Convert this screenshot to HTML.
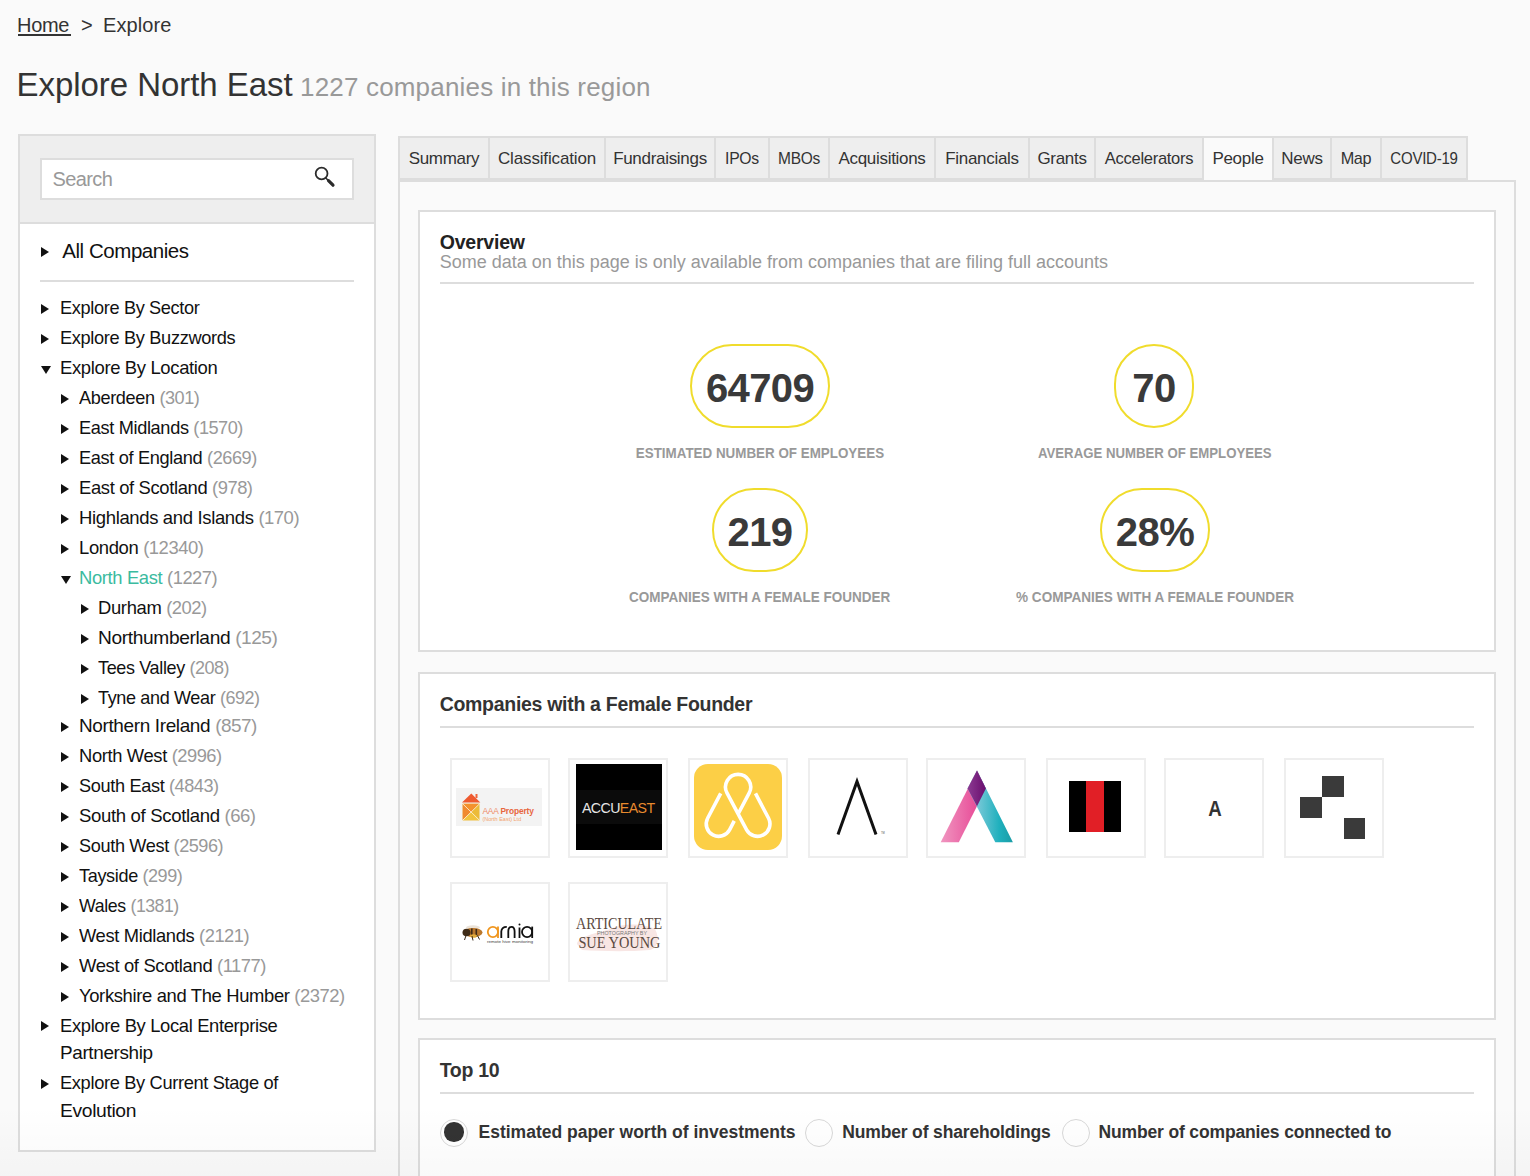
<!DOCTYPE html>
<html><head><meta charset="utf-8"><title>Explore North East</title>
<style>
html,body{margin:0;padding:0}
body{width:1530px;height:1176px;overflow:hidden;position:relative;background:#fafafa;font-family:"Liberation Sans",sans-serif}
.t{position:absolute;white-space:nowrap;line-height:1}
.r{position:absolute}
</style></head><body>
<div class="t" style="left:17px;top:15px;font-size:20px;color:#333;letter-spacing:-0.3px;">Home</div>
<div class="r" style="left:18px;top:34px;width:53px;height:2px;background:#333"></div>
<div class="t" style="left:81px;top:15px;font-size:20px;color:#333;">&gt;</div>
<div class="t" style="left:103px;top:15px;font-size:20px;color:#333;letter-spacing:0.1px;">Explore</div>
<div class="t" style="left:16.5px;top:68px;font-size:33px;color:#333;letter-spacing:-0.05px;">Explore North East</div>
<div class="t" style="left:300px;top:74px;font-size:26px;color:#999;letter-spacing:0.18px;">1227 companies in this region</div>
<div class="r" style="left:18px;top:134px;width:358px;height:1018px;border:2px solid #ddd;box-sizing:border-box;background:#fff"></div>
<div class="r" style="left:20px;top:136px;width:354px;height:86px;background:#eee"></div>
<div class="r" style="left:20px;top:222px;width:354px;height:2px;background:#ddd"></div>
<div class="r" style="left:40px;top:158px;width:314px;height:42px;border:2px solid #ddd;box-sizing:border-box;background:#fff"></div>
<div class="t" style="left:52.5px;top:169px;font-size:20px;color:#999;letter-spacing:-0.6px;">Search</div>
<svg class="r" style="left:312px;top:164px" width="26" height="26" viewBox="0 0 26 26"><circle cx="9.6" cy="9.5" r="5.9" fill="none" stroke="#2b2b2b" stroke-width="1.8"/><line x1="13.6" y1="13.8" x2="21" y2="21.2" stroke="#2b2b2b" stroke-width="1.6"/><line x1="16.5" y1="16.7" x2="21" y2="21.2" stroke="#2b2b2b" stroke-width="3.2" stroke-linecap="round"/></svg>
<div class="r" style="left:41px;top:246.5px;width:0;height:0;border-top:5px solid transparent;border-bottom:5px solid transparent;border-left:8px solid #111"></div>
<div class="t" style="left:62.3px;top:241px;font-size:20.5px;color:#111;letter-spacing:-0.45px;">All Companies</div>
<div class="r" style="left:40px;top:280px;width:314px;height:2px;background:#ddd"></div>
<div class="r" style="left:41px;top:303.5px;width:0;height:0;border-top:5px solid transparent;border-bottom:5px solid transparent;border-left:8px solid #111"></div>
<div class="t" style="left:60.3px;top:299px;font-size:18.5px;color:#111;letter-spacing:-0.35px;transform-origin:0 0;transform:scaleX(0.9817);">Explore By Sector</div>
<div class="r" style="left:41px;top:333.5px;width:0;height:0;border-top:5px solid transparent;border-bottom:5px solid transparent;border-left:8px solid #111"></div>
<div class="t" style="left:60.3px;top:329px;font-size:18.5px;color:#111;letter-spacing:-0.35px;transform-origin:0 0;transform:scaleX(0.9842);">Explore By Buzzwords</div>
<div class="r" style="left:41px;top:365.5px;width:0;height:0;border-left:5px solid transparent;border-right:5px solid transparent;border-top:8px solid #111"></div>
<div class="t" style="left:60.3px;top:359px;font-size:18.5px;color:#111;letter-spacing:-0.35px;transform-origin:0 0;transform:scaleX(0.9968);">Explore By Location</div>
<div class="r" style="left:61px;top:393.5px;width:0;height:0;border-top:5px solid transparent;border-bottom:5px solid transparent;border-left:8px solid #111"></div>
<div class="t" style="left:79.3px;top:389px;font-size:18.5px;color:#111;letter-spacing:-0.35px;transform-origin:0 0;transform:scaleX(0.9786);">Aberdeen <span style="color:#999;letter-spacing:-0.5px">(301)</span></div>
<div class="r" style="left:61px;top:423.5px;width:0;height:0;border-top:5px solid transparent;border-bottom:5px solid transparent;border-left:8px solid #111"></div>
<div class="t" style="left:79.3px;top:419px;font-size:18.5px;color:#111;letter-spacing:-0.35px;transform-origin:0 0;transform:scaleX(0.9819);">East Midlands <span style="color:#999;letter-spacing:-0.5px">(1570)</span></div>
<div class="r" style="left:61px;top:453.5px;width:0;height:0;border-top:5px solid transparent;border-bottom:5px solid transparent;border-left:8px solid #111"></div>
<div class="t" style="left:79.3px;top:449px;font-size:18.5px;color:#111;letter-spacing:-0.35px;transform-origin:0 0;transform:scaleX(0.9838);">East of England <span style="color:#999;letter-spacing:-0.5px">(2669)</span></div>
<div class="r" style="left:61px;top:483.5px;width:0;height:0;border-top:5px solid transparent;border-bottom:5px solid transparent;border-left:8px solid #111"></div>
<div class="t" style="left:79.3px;top:479px;font-size:18.5px;color:#111;letter-spacing:-0.35px;transform-origin:0 0;transform:scaleX(0.9936);">East of Scotland <span style="color:#999;letter-spacing:-0.5px">(978)</span></div>
<div class="r" style="left:61px;top:513.5px;width:0;height:0;border-top:5px solid transparent;border-bottom:5px solid transparent;border-left:8px solid #111"></div>
<div class="t" style="left:79.3px;top:509px;font-size:18.5px;color:#111;letter-spacing:-0.35px;transform-origin:0 0;transform:scaleX(0.9995);">Highlands and Islands <span style="color:#999;letter-spacing:-0.5px">(170)</span></div>
<div class="r" style="left:61px;top:543.5px;width:0;height:0;border-top:5px solid transparent;border-bottom:5px solid transparent;border-left:8px solid #111"></div>
<div class="t" style="left:79.3px;top:539px;font-size:18.5px;color:#111;letter-spacing:-0.35px;transform-origin:0 0;transform:scaleX(0.9967);">London <span style="color:#999;letter-spacing:-0.5px">(12340)</span></div>
<div class="r" style="left:61px;top:575.5px;width:0;height:0;border-left:5px solid transparent;border-right:5px solid transparent;border-top:8px solid #111"></div>
<div class="t" style="left:79.3px;top:569px;font-size:18.5px;color:#3bbba0;letter-spacing:-0.35px;transform-origin:0 0;transform:scaleX(0.9927);">North East <span style="color:#999;letter-spacing:-0.5px">(1227)</span></div>
<div class="r" style="left:81px;top:603.5px;width:0;height:0;border-top:5px solid transparent;border-bottom:5px solid transparent;border-left:8px solid #111"></div>
<div class="t" style="left:98.3px;top:599px;font-size:18.5px;color:#111;letter-spacing:-0.35px;transform-origin:0 0;transform:scaleX(0.9954);">Durham <span style="color:#999;letter-spacing:-0.5px">(202)</span></div>
<div class="r" style="left:81px;top:633.5px;width:0;height:0;border-top:5px solid transparent;border-bottom:5px solid transparent;border-left:8px solid #111"></div>
<div class="t" style="left:98.3px;top:629px;font-size:18.5px;color:#111;letter-spacing:-0.35px;transform-origin:0 0;transform:scaleX(1.0349);">Northumberland <span style="color:#999;letter-spacing:-0.5px">(125)</span></div>
<div class="r" style="left:81px;top:663.5px;width:0;height:0;border-top:5px solid transparent;border-bottom:5px solid transparent;border-left:8px solid #111"></div>
<div class="t" style="left:98.3px;top:659px;font-size:18.5px;color:#111;letter-spacing:-0.35px;transform-origin:0 0;transform:scaleX(0.9723);">Tees Valley <span style="color:#999;letter-spacing:-0.5px">(208)</span></div>
<div class="r" style="left:81px;top:693.5px;width:0;height:0;border-top:5px solid transparent;border-bottom:5px solid transparent;border-left:8px solid #111"></div>
<div class="t" style="left:98.3px;top:689px;font-size:18.5px;color:#111;letter-spacing:-0.35px;transform-origin:0 0;transform:scaleX(0.9733);">Tyne and Wear <span style="color:#999;letter-spacing:-0.5px">(692)</span></div>
<div class="r" style="left:61px;top:721.5px;width:0;height:0;border-top:5px solid transparent;border-bottom:5px solid transparent;border-left:8px solid #111"></div>
<div class="t" style="left:79.3px;top:717px;font-size:18.5px;color:#111;letter-spacing:-0.35px;transform-origin:0 0;transform:scaleX(1.0245);">Northern Ireland <span style="color:#999;letter-spacing:-0.5px">(857)</span></div>
<div class="r" style="left:61px;top:751.5px;width:0;height:0;border-top:5px solid transparent;border-bottom:5px solid transparent;border-left:8px solid #111"></div>
<div class="t" style="left:79.3px;top:747px;font-size:18.5px;color:#111;letter-spacing:-0.35px;transform-origin:0 0;transform:scaleX(0.9909);">North West <span style="color:#999;letter-spacing:-0.5px">(2996)</span></div>
<div class="r" style="left:61px;top:781.5px;width:0;height:0;border-top:5px solid transparent;border-bottom:5px solid transparent;border-left:8px solid #111"></div>
<div class="t" style="left:79.3px;top:777px;font-size:18.5px;color:#111;letter-spacing:-0.35px;transform-origin:0 0;transform:scaleX(0.9808);">South East <span style="color:#999;letter-spacing:-0.5px">(4843)</span></div>
<div class="r" style="left:61px;top:811.5px;width:0;height:0;border-top:5px solid transparent;border-bottom:5px solid transparent;border-left:8px solid #111"></div>
<div class="t" style="left:79.3px;top:807px;font-size:18.5px;color:#111;letter-spacing:-0.35px;transform-origin:0 0;transform:scaleX(1.004);">South of Scotland <span style="color:#999;letter-spacing:-0.5px">(66)</span></div>
<div class="r" style="left:61px;top:841.5px;width:0;height:0;border-top:5px solid transparent;border-bottom:5px solid transparent;border-left:8px solid #111"></div>
<div class="t" style="left:79.3px;top:837px;font-size:18.5px;color:#111;letter-spacing:-0.35px;transform-origin:0 0;transform:scaleX(0.9794);">South West <span style="color:#999;letter-spacing:-0.5px">(2596)</span></div>
<div class="r" style="left:61px;top:871.5px;width:0;height:0;border-top:5px solid transparent;border-bottom:5px solid transparent;border-left:8px solid #111"></div>
<div class="t" style="left:79.3px;top:867px;font-size:18.5px;color:#111;letter-spacing:-0.35px;transform-origin:0 0;transform:scaleX(0.9761);">Tayside <span style="color:#999;letter-spacing:-0.5px">(299)</span></div>
<div class="r" style="left:61px;top:901.5px;width:0;height:0;border-top:5px solid transparent;border-bottom:5px solid transparent;border-left:8px solid #111"></div>
<div class="t" style="left:79.3px;top:897px;font-size:18.5px;color:#111;letter-spacing:-0.35px;transform-origin:0 0;transform:scaleX(0.9572);">Wales <span style="color:#999;letter-spacing:-0.5px">(1381)</span></div>
<div class="r" style="left:61px;top:931.5px;width:0;height:0;border-top:5px solid transparent;border-bottom:5px solid transparent;border-left:8px solid #111"></div>
<div class="t" style="left:79.3px;top:927px;font-size:18.5px;color:#111;letter-spacing:-0.35px;transform-origin:0 0;transform:scaleX(0.9906);">West Midlands <span style="color:#999;letter-spacing:-0.5px">(2121)</span></div>
<div class="r" style="left:61px;top:961.5px;width:0;height:0;border-top:5px solid transparent;border-bottom:5px solid transparent;border-left:8px solid #111"></div>
<div class="t" style="left:79.3px;top:957px;font-size:18.5px;color:#111;letter-spacing:-0.35px;transform-origin:0 0;transform:scaleX(0.9952);">West of Scotland <span style="color:#999;letter-spacing:-0.5px">(1177)</span></div>
<div class="r" style="left:61px;top:991.5px;width:0;height:0;border-top:5px solid transparent;border-bottom:5px solid transparent;border-left:8px solid #111"></div>
<div class="t" style="left:79.3px;top:987px;font-size:18.5px;color:#111;letter-spacing:-0.35px;transform-origin:0 0;transform:scaleX(0.9947);">Yorkshire and The Humber <span style="color:#999;letter-spacing:-0.5px">(2372)</span></div>
<div class="r" style="left:41px;top:1021.3px;width:0;height:0;border-top:5px solid transparent;border-bottom:5px solid transparent;border-left:8px solid #111"></div>
<div class="t" style="left:60.3px;top:1016.8px;font-size:18.5px;color:#111;letter-spacing:-0.35px;transform-origin:0 0;transform:scaleX(0.9936);">Explore By Local Enterprise</div>
<div class="t" style="left:60.3px;top:1044.4px;font-size:18.5px;color:#111;letter-spacing:-0.35px;transform-origin:0 0;transform:scaleX(1.0223);">Partnership</div>
<div class="r" style="left:41px;top:1078.5px;width:0;height:0;border-top:5px solid transparent;border-bottom:5px solid transparent;border-left:8px solid #111"></div>
<div class="t" style="left:60.3px;top:1074px;font-size:18.5px;color:#111;letter-spacing:-0.35px;transform-origin:0 0;transform:scaleX(0.9869);">Explore By Current Stage of</div>
<div class="t" style="left:60.3px;top:1102px;font-size:18.5px;color:#111;letter-spacing:-0.35px;transform-origin:0 0;transform:scaleX(1.0432);">Evolution</div>
<div class="r" style="left:398px;top:180px;width:1118px;height:1200px;border:2px solid #ddd;box-sizing:border-box;background:#fafafa"></div>
<div class="r" style="left:398px;top:136px;width:1070px;height:2px;background:#ddd"></div>
<div class="r" style="left:400px;top:138px;width:88px;height:40px;background:#eee"></div>
<div class="r" style="left:398px;top:178px;width:92px;height:2px;background:#ddd"></div>
<div class="t" style="left:400px;top:150px;width:88px;text-align:center;font-size:17px;color:#333;letter-spacing:-0.3px;transform:scaleX(1)">Summary</div>
<div class="r" style="left:490px;top:138px;width:114px;height:40px;background:#eee"></div>
<div class="r" style="left:488px;top:178px;width:118px;height:2px;background:#ddd"></div>
<div class="t" style="left:490px;top:150px;width:114px;text-align:center;font-size:17px;color:#333;letter-spacing:-0.15px;transform:scaleX(1)">Classification</div>
<div class="r" style="left:606px;top:138px;width:108px;height:40px;background:#eee"></div>
<div class="r" style="left:604px;top:178px;width:112px;height:2px;background:#ddd"></div>
<div class="t" style="left:606px;top:150px;width:108px;text-align:center;font-size:17px;color:#333;letter-spacing:-0.3px;transform:scaleX(1)">Fundraisings</div>
<div class="r" style="left:716px;top:138px;width:52px;height:40px;background:#eee"></div>
<div class="r" style="left:714px;top:178px;width:56px;height:2px;background:#ddd"></div>
<div class="t" style="left:716px;top:150px;width:52px;text-align:center;font-size:17px;color:#333;letter-spacing:-0.3px;transform:scaleX(0.926)">IPOs</div>
<div class="r" style="left:770px;top:138px;width:58px;height:40px;background:#eee"></div>
<div class="r" style="left:768px;top:178px;width:62px;height:2px;background:#ddd"></div>
<div class="t" style="left:770px;top:150px;width:58px;text-align:center;font-size:17px;color:#333;letter-spacing:-0.3px;transform:scaleX(0.911)">MBOs</div>
<div class="r" style="left:830px;top:138px;width:104px;height:40px;background:#eee"></div>
<div class="r" style="left:828px;top:178px;width:108px;height:2px;background:#ddd"></div>
<div class="t" style="left:830px;top:150px;width:104px;text-align:center;font-size:17px;color:#333;letter-spacing:-0.3px;transform:scaleX(1)">Acquisitions</div>
<div class="r" style="left:936px;top:138px;width:92px;height:40px;background:#eee"></div>
<div class="r" style="left:934px;top:178px;width:96px;height:2px;background:#ddd"></div>
<div class="t" style="left:936px;top:150px;width:92px;text-align:center;font-size:17px;color:#333;letter-spacing:-0.3px;transform:scaleX(1)">Financials</div>
<div class="r" style="left:1030px;top:138px;width:64px;height:40px;background:#eee"></div>
<div class="r" style="left:1028px;top:178px;width:68px;height:2px;background:#ddd"></div>
<div class="t" style="left:1030px;top:150px;width:64px;text-align:center;font-size:17px;color:#333;letter-spacing:-0.3px;transform:scaleX(1)">Grants</div>
<div class="r" style="left:1096px;top:138px;width:106px;height:40px;background:#eee"></div>
<div class="r" style="left:1094px;top:178px;width:110px;height:2px;background:#ddd"></div>
<div class="t" style="left:1096px;top:150px;width:106px;text-align:center;font-size:17px;color:#333;letter-spacing:-0.3px;transform:scaleX(0.973)">Accelerators</div>
<div class="r" style="left:1204px;top:138px;width:68px;height:42px;background:#fafafa"></div>
<div class="t" style="left:1204px;top:150px;width:68px;text-align:center;font-size:17px;color:#333;letter-spacing:-0.3px;transform:scaleX(1)">People</div>
<div class="r" style="left:1274px;top:138px;width:56px;height:40px;background:#eee"></div>
<div class="r" style="left:1272px;top:178px;width:60px;height:2px;background:#ddd"></div>
<div class="t" style="left:1274px;top:150px;width:56px;text-align:center;font-size:17px;color:#333;letter-spacing:-0.3px;transform:scaleX(1)">News</div>
<div class="r" style="left:1332px;top:138px;width:48px;height:40px;background:#eee"></div>
<div class="r" style="left:1330px;top:178px;width:52px;height:2px;background:#ddd"></div>
<div class="t" style="left:1332px;top:150px;width:48px;text-align:center;font-size:17px;color:#333;letter-spacing:-0.3px;transform:scaleX(0.955)">Map</div>
<div class="r" style="left:1382px;top:138px;width:84px;height:40px;background:#eee"></div>
<div class="r" style="left:1380px;top:178px;width:88px;height:2px;background:#ddd"></div>
<div class="t" style="left:1382px;top:150px;width:84px;text-align:center;font-size:17px;color:#333;letter-spacing:-0.3px;transform:scaleX(0.885)">COVID-19</div>
<div class="r" style="left:398px;top:136px;width:2px;height:44px;background:#ddd"></div>
<div class="r" style="left:488px;top:136px;width:2px;height:44px;background:#ddd"></div>
<div class="r" style="left:604px;top:136px;width:2px;height:44px;background:#ddd"></div>
<div class="r" style="left:714px;top:136px;width:2px;height:44px;background:#ddd"></div>
<div class="r" style="left:768px;top:136px;width:2px;height:44px;background:#ddd"></div>
<div class="r" style="left:828px;top:136px;width:2px;height:44px;background:#ddd"></div>
<div class="r" style="left:934px;top:136px;width:2px;height:44px;background:#ddd"></div>
<div class="r" style="left:1028px;top:136px;width:2px;height:44px;background:#ddd"></div>
<div class="r" style="left:1094px;top:136px;width:2px;height:44px;background:#ddd"></div>
<div class="r" style="left:1202px;top:136px;width:2px;height:44px;background:#ddd"></div>
<div class="r" style="left:1272px;top:136px;width:2px;height:44px;background:#ddd"></div>
<div class="r" style="left:1330px;top:136px;width:2px;height:44px;background:#ddd"></div>
<div class="r" style="left:1380px;top:136px;width:2px;height:44px;background:#ddd"></div>
<div class="r" style="left:1466px;top:136px;width:2px;height:44px;background:#ddd"></div>
<div class="r" style="left:418px;top:210px;width:1078px;height:442px;border:2px solid #ddd;box-sizing:border-box;background:#fff"></div>
<div class="t" style="left:439.7px;top:232.8px;font-size:19.5px;font-weight:700;color:#222;letter-spacing:-0.2px;">Overview</div>
<div class="t" style="left:439.7px;top:252.8px;font-size:18px;color:#999;">Some data on this page is only available from companies that are filing full accounts</div>
<div class="r" style="left:440px;top:282px;width:1034px;height:2px;background:#ddd"></div>
<div class="r" style="left:690px;top:344px;width:140px;height:84px;border:2px solid #f0dc2c;box-sizing:border-box;border-radius:42px;background:#fff"></div>
<div class="t" style="left:690px;top:367.5px;width:140px;text-align:center;font-size:40px;font-weight:700;color:#3a3a3a;letter-spacing:-0.6px">64709</div>
<div class="t" style="left:615.6px;top:445px;width:287.9px;text-align:center;font-size:15px;font-weight:700;color:#999;transform:scaleX(0.893)">ESTIMATED NUMBER OF EMPLOYEES</div>
<div class="r" style="left:1114px;top:344px;width:80px;height:84px;border:2px solid #f0dc2c;box-sizing:border-box;border-radius:42px;background:#fff"></div>
<div class="t" style="left:1114px;top:367.5px;width:80px;text-align:center;font-size:40px;font-weight:700;color:#3a3a3a;letter-spacing:-0.6px">70</div>
<div class="t" style="left:1018px;top:445px;width:273.5999999999999px;text-align:center;font-size:15px;font-weight:700;color:#999;transform:scaleX(0.88)">AVERAGE NUMBER OF EMPLOYEES</div>
<div class="r" style="left:712px;top:488px;width:96px;height:84px;border:2px solid #f0dc2c;box-sizing:border-box;border-radius:42px;background:#fff"></div>
<div class="t" style="left:712px;top:511.5px;width:96px;text-align:center;font-size:40px;font-weight:700;color:#3a3a3a;letter-spacing:-0.6px">219</div>
<div class="t" style="left:608.8px;top:589px;width:301.20000000000005px;text-align:center;font-size:15px;font-weight:700;color:#999;transform:scaleX(0.9)">COMPANIES WITH A FEMALE FOUNDER</div>
<div class="r" style="left:1100px;top:488px;width:110px;height:84px;border:2px solid #f0dc2c;box-sizing:border-box;border-radius:42px;background:#fff"></div>
<div class="t" style="left:1100px;top:511.5px;width:110px;text-align:center;font-size:40px;font-weight:700;color:#3a3a3a;letter-spacing:-0.6px">28%</div>
<div class="t" style="left:995.8px;top:589px;width:318.0px;text-align:center;font-size:15px;font-weight:700;color:#999;transform:scaleX(0.903)">% COMPANIES WITH A FEMALE FOUNDER</div>
<div class="r" style="left:418px;top:672px;width:1078px;height:348px;border:2px solid #ddd;box-sizing:border-box;background:#fff"></div>
<div class="t" style="left:439.7px;top:694.8px;font-size:19.5px;font-weight:700;color:#333;letter-spacing:-0.3px;">Companies with a Female Founder</div>
<div class="r" style="left:440px;top:726px;width:1034px;height:2px;background:#ddd"></div>
<div class="r" style="left:450px;top:758px;width:100px;height:100px;border:2px solid #eee;box-sizing:border-box;background:#fff"></div>
<div class="r" style="left:568px;top:758px;width:100px;height:100px;border:2px solid #eee;box-sizing:border-box;background:#fff"></div>
<div class="r" style="left:688px;top:758px;width:100px;height:100px;border:2px solid #eee;box-sizing:border-box;background:#fff"></div>
<div class="r" style="left:808px;top:758px;width:100px;height:100px;border:2px solid #eee;box-sizing:border-box;background:#fff"></div>
<div class="r" style="left:926px;top:758px;width:100px;height:100px;border:2px solid #eee;box-sizing:border-box;background:#fff"></div>
<div class="r" style="left:1046px;top:758px;width:100px;height:100px;border:2px solid #eee;box-sizing:border-box;background:#fff"></div>
<div class="r" style="left:1164px;top:758px;width:100px;height:100px;border:2px solid #eee;box-sizing:border-box;background:#fff"></div>
<div class="r" style="left:1284px;top:758px;width:100px;height:100px;border:2px solid #eee;box-sizing:border-box;background:#fff"></div>
<div class="r" style="left:450px;top:882px;width:100px;height:100px;border:2px solid #eee;box-sizing:border-box;background:#fff"></div>
<div class="r" style="left:568px;top:882px;width:100px;height:100px;border:2px solid #eee;box-sizing:border-box;background:#fff"></div>
<svg class="r" style="left:450px;top:758px" width="100" height="100" viewBox="450 758 100 100">
<rect x="456" y="788" width="86" height="38" fill="#f3f3f3"/>
<polygon points="462,802.6 471.3,793.6 480.3,802.6" fill="#ee5a30"/>
<rect x="475.5" y="794" width="2" height="4" fill="#f0643a"/>
<rect x="462.7" y="803.8" width="16.8" height="16.5" fill="#ecbb38"/>
<polygon points="462.7,803.8 462.7,820.3 471.1,812" fill="#f08a30"/>
<polygon points="462.7,803.8 479.5,803.8 471.1,812" fill="#f3912e"/>
<polygon points="462.7,820.3 479.5,820.3 471.1,812" fill="#f2c43e"/>
<line x1="462.7" y1="803.8" x2="479.5" y2="820.3" stroke="#fff" stroke-width="0.7"/>
<line x1="479.5" y1="803.8" x2="462.7" y2="820.3" stroke="#fff" stroke-width="0.7"/>
<text x="482.4" y="814" font-family="Liberation Sans" font-size="8.4" letter-spacing="-0.15" fill="#ef8a66">AAA <tspan font-weight="700" fill="#e8663e">Property</tspan></text>
<text x="482.4" y="821" font-family="Liberation Sans" font-size="5.5" fill="#f2a36e">(North East) Ltd</text>
</svg>
<svg class="r" style="left:568px;top:758px" width="100" height="100" viewBox="568 758 100 100">
<rect x="576" y="764" width="86" height="86" fill="#000"/>
<rect x="576" y="790" width="86" height="34" fill="#0b0b0b"/>
<text x="582" y="812.5" font-family="Liberation Sans" font-size="14.2" letter-spacing="-0.6" fill="#e6e6e6">ACCU<tspan fill="#e88a2e">EAST</tspan></text>
</svg>
<svg class="r" style="left:694px;top:764px" width="88" height="86" viewBox="0 0 88 86">
<rect x="0" y="0" width="88" height="86" rx="14" ry="14" fill="#fccf46"/>
<path d="M61.5,29.45 L74.57,54.22 A12.4,12.4 0 0 1 52.63,65.78 L32.95,28.88 A12.6,12.6 0 1 1 55.25,28.88 L44.52,49.23" fill="none" stroke="#fff" stroke-width="3.6"/>
<path d="M26.7,29.45 L13.63,54.22 A12.4,12.4 0 0 0 35.57,65.78 L40.23,56.93" fill="none" stroke="#fff" stroke-width="3.6"/>
</svg>
<svg class="r" style="left:808px;top:758px" width="100" height="100" viewBox="808 758 100 100">
<polyline points="838,834.4 857,781.5 876,834.4" fill="none" stroke="#111" stroke-width="3" stroke-linejoin="miter"/>
<text x="881" y="833.5" font-family="Liberation Sans" font-size="2.6" fill="#555">TM</text>
</svg>
<svg class="r" style="left:926px;top:758px" width="100" height="100" viewBox="926 758 100 100">
<defs>
<linearGradient id="gp" x1="0" y1="0" x2="1" y2="0"><stop offset="0" stop-color="#f096c0"/><stop offset="1" stop-color="#e63a8e"/></linearGradient>
<linearGradient id="gt" x1="0" y1="0" x2="1" y2="0"><stop offset="0" stop-color="#9fd3e3"/><stop offset="0.7" stop-color="#1fb0bd"/><stop offset="1" stop-color="#1a9ca6"/></linearGradient>
<linearGradient id="gu" x1="0" y1="0" x2="1" y2="0"><stop offset="0" stop-color="#8c3a92"/><stop offset="1" stop-color="#6a0e6e"/></linearGradient>
</defs>
<polygon points="940.7,842.2 977,770.4 985.9,788.5 958.8,842.2" fill="url(#gp)"/>
<polygon points="1012.9,842.2 977,770.4 967.5,788.5 995.3,842.2" fill="url(#gt)"/>
<polygon points="977,770.4 985.9,788.5 977,806.2 967.5,788.5" fill="url(#gu)"/>
</svg>
<svg class="r" style="left:1046px;top:758px" width="100" height="100" viewBox="1046 758 100 100">
<rect x="1069" y="781" width="52" height="51" fill="#000"/>
<rect x="1086" y="781" width="18" height="51" fill="#e11f26"/>
</svg>
<div class="t" style="left:1164.5px;top:798px;width:100px;text-align:center;font-size:22px;font-weight:700;color:#333;line-height:1;transform:scaleX(0.85)">A</div>
<svg class="r" style="left:1284px;top:758px" width="100" height="100" viewBox="1284 758 100 100">
<rect x="1322" y="776" width="22" height="21" fill="#3a3a3a"/>
<rect x="1300" y="797" width="22" height="21" fill="#3a3a3a"/>
<rect x="1344" y="818" width="21" height="21" fill="#3a3a3a"/>
</svg>
<svg class="r" style="left:450px;top:882px" width="100" height="100" viewBox="450 882 100 100">
<ellipse cx="473" cy="927.5" rx="7" ry="2.2" fill="#e6dccf" opacity="0.8"/>
<ellipse cx="473" cy="932.5" rx="9.5" ry="4.6" fill="#b9772c"/>
<ellipse cx="466.5" cy="932.5" rx="4" ry="3.8" fill="#3e2a16"/>
<rect x="471" y="928.5" width="1.6" height="8.5" fill="#3e2a16"/>
<rect x="475.5" y="929" width="1.6" height="8" fill="#3e2a16"/>
<ellipse cx="473.5" cy="936" rx="3.5" ry="1.8" fill="#e0a93a"/>
<line x1="466" y1="935.5" x2="464.5" y2="940" stroke="#3b2a18" stroke-width="1"/>
<line x1="472" y1="936" x2="473" y2="940.5" stroke="#3b2a18" stroke-width="1"/>
<line x1="477.5" y1="935.5" x2="479.5" y2="939.5" stroke="#3b2a18" stroke-width="1"/>
<g fill="none" stroke-width="1.8">
<circle cx="492.9" cy="932" r="5.1" stroke="#f0961e"/>
<line x1="498" y1="926.6" x2="498" y2="938" stroke="#f0961e"/>
<path d="M501.3,938 L501.3,931.5 Q501.5,926.8 506.8,926.8" stroke="#111"/>
<path d="M508.3,938 L508.3,931.5 Q508.3,926.8 511.5,926.8 Q514.6,926.8 514.6,931.5 L514.6,938" stroke="#111"/>
<line x1="519.5" y1="927.5" x2="519.5" y2="938" stroke="#111"/>
<circle cx="527.1" cy="932" r="5.1" stroke="#111"/>
<line x1="532.2" y1="926.6" x2="532.2" y2="938" stroke="#111"/>
</g>
<circle cx="519.5" cy="924.4" r="1" fill="#111"/>
<text x="487" y="943.2" font-family="Liberation Sans" font-size="3.8" textLength="46" lengthAdjust="spacingAndGlyphs" fill="#444">remote hive monitoring</text>
</svg>
<svg class="r" style="left:568px;top:882px" width="100" height="100" viewBox="568 882 100 100">
<path d="M577,944 C578,936 595,934 610,929 C625,922 645,924 655,929 C660,938 658,948 650,950 C625,952 600,951 582,950 Z" fill="#f8e6e4"/>
<text x="576" y="929.3" font-family="Liberation Serif" font-size="16.5" textLength="86" lengthAdjust="spacingAndGlyphs" fill="#5a4940">ARTICULATE</text>
<text x="597" y="935" font-family="Liberation Sans" font-size="4.5" textLength="50" lengthAdjust="spacingAndGlyphs" fill="#777">PHOTOGRAPHY BY</text>
<text x="578.4" y="948.4" font-family="Liberation Serif" font-size="16" textLength="82" lengthAdjust="spacingAndGlyphs" fill="#5a4940">SUE YOUNG</text>
</svg>

<div class="r" style="left:418px;top:1038px;width:1078px;height:200px;border:2px solid #ddd;box-sizing:border-box;background:#fff"></div>
<div class="t" style="left:439.7px;top:1061px;font-size:19.5px;font-weight:700;color:#333;letter-spacing:-0.3px;">Top 10</div>
<div class="r" style="left:440px;top:1092px;width:1034px;height:2px;background:#ddd"></div>
<div class="r" style="left:440px;top:1119px;width:28px;height:28px;border:1.5px solid #d8d8d8;box-sizing:border-box;border-radius:50%;background:#fff"></div>
<div class="r" style="left:444.3px;top:1122.3px;width:19.4px;height:19.4px;border-radius:50%;background:#333"></div>
<div class="t" style="left:478.5px;top:1124px;font-size:17.5px;font-weight:700;color:#333;">Estimated paper worth of investments</div>
<div class="r" style="left:805px;top:1119px;width:28px;height:28px;border:1.5px solid #d8d8d8;box-sizing:border-box;border-radius:50%;background:#fff"></div>
<div class="t" style="left:842.2px;top:1124px;font-size:17.5px;font-weight:700;color:#333;letter-spacing:-0.15px;">Number of shareholdings</div>
<div class="r" style="left:1062px;top:1119px;width:28px;height:28px;border:1.5px solid #d8d8d8;box-sizing:border-box;border-radius:50%;background:#fff"></div>
<div class="t" style="left:1098.5px;top:1124px;font-size:17.5px;font-weight:700;color:#333;letter-spacing:-0.15px;">Number of companies connected to</div>
<div class="r" style="left:0px;top:1105px;width:1530px;height:71px;background:linear-gradient(rgba(0,0,0,0),rgba(0,0,0,0.025))"></div>
</body></html>
